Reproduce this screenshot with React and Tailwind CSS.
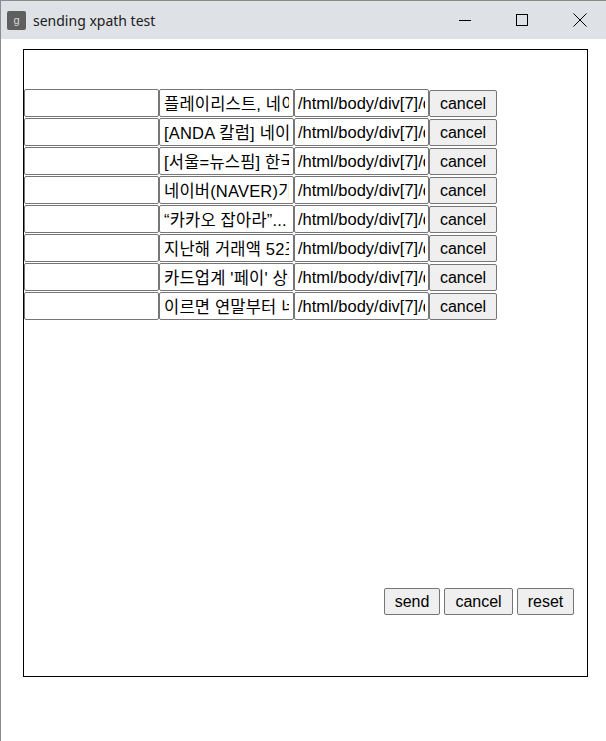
import { useState } from "react";

const titles = [
  "플레이리스트, 네이버",
  "[ANDA 칼럼] 네이버",
  "[서울=뉴스핌] 한국",
  "네이버(NAVER)가",
  "“카카오 잡아라”...",
  "지난해 거래액 52조",
  "카드업계 '페이' 상품",
  "이르면 연말부터 네이버",
];

const font = "font-['Liberation_Sans','Noto_Sans_CJK_KR',sans-serif]";

function Row({ title }) {
  return (
    <div className="flex h-[29px] items-start">
      <input
        className="h-[28px] w-[135px] rounded-[2px] border border-[#767676] bg-white px-[4px] text-[16px] text-black outline-none"
        defaultValue=""
      />
      <input
        className="h-[28px] w-[135px] rounded-[2px] border border-[#767676] bg-white px-[4px] text-[16.5px] tracking-[0.2px] text-black outline-none"
        defaultValue={title}
      />
      <input
        className="h-[28px] w-[135px] rounded-[2px] border border-[#767676] bg-white px-[3px] text-[16.5px] text-black outline-none"
        defaultValue="/html/body/div[7]/div/div"
      />
      <button className="mt-[1px] h-[27px] w-[68px] rounded-[2px] border border-[#767676] bg-[#efefef] text-[16px] text-black">
        cancel
      </button>
    </div>
  );
}

export default function App() {
  const [rows] = useState(titles);

  return (
    <div className={`flex h-[741px] w-[606px] flex-col border-l border-t border-[#8c8c8c] bg-white ${font}`}>
      {/* Title bar */}
      <div className="flex h-[38px] shrink-0 items-center bg-[#dee1e6]">
        <div className="ml-[6px] flex h-[19px] w-[19px] items-center justify-center rounded-[2px] bg-[#5f5f5f] text-[11px] leading-none text-[#d8d8d8]">
          g
        </div>
        <span className="ml-[7px] font-['Noto_Sans',sans-serif] text-[14px] text-[#202020]">sending xpath test</span>
        <div className="ml-auto flex items-center">
          <svg width="12" height="12" viewBox="0 0 12 12" className="mr-[45px]">
            <path d="M0 6.5h12" stroke="#000" strokeWidth="1" />
          </svg>
          <svg width="12" height="12" viewBox="0 0 12 12" className="mr-[45px]">
            <rect x="0.5" y="0.5" width="11" height="11" fill="none" stroke="#000" strokeWidth="1" />
          </svg>
          <svg width="14" height="14" viewBox="0 0 14 14" className="mr-[19px]">
            <path d="M0.5 0.5l13 13M13.5 0.5l-13 13" stroke="#000" strokeWidth="1" />
          </svg>
        </div>
      </div>

      {/* Content */}
      <div className="pl-[22px] pt-[10px]">
        <div className="flex h-[628px] w-[565px] flex-col border border-black">
          <div className="flex flex-col pt-[39px]">
            {rows.map((t, i) => (
              <Row key={i} title={t} />
            ))}
          </div>

          <div className="mt-auto flex justify-end gap-[4px] pb-[61px] pr-[13px]">
            <button className="h-[27px] w-[56px] rounded-[2px] border border-[#767676] bg-[#efefef] text-[16px] text-black">
              send
            </button>
            <button className="h-[27px] w-[69px] rounded-[2px] border border-[#767676] bg-[#efefef] text-[16px] text-black">
              cancel
            </button>
            <button className="h-[27px] w-[57px] rounded-[2px] border border-[#767676] bg-[#efefef] text-[16px] text-black">
              reset
            </button>
          </div>
        </div>
      </div>
    </div>
  );
}
